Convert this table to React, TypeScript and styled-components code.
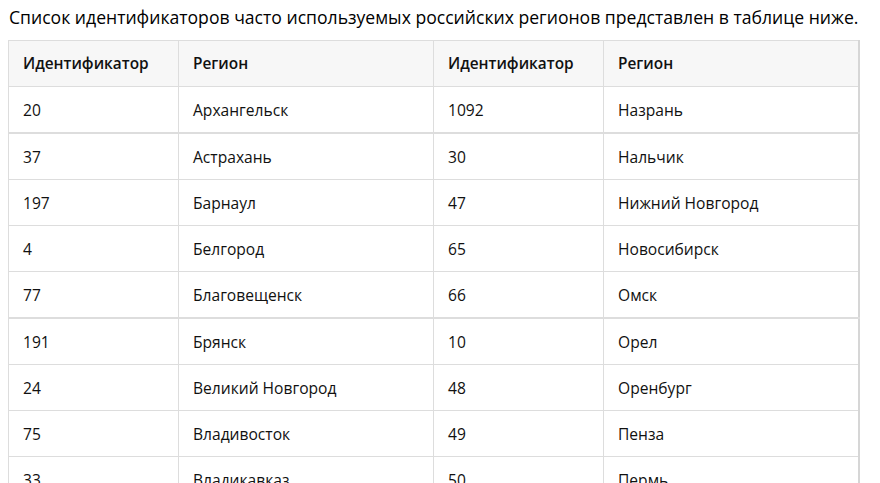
import React from "react";
import styled, { createGlobalStyle } from "styled-components";

const Global = createGlobalStyle`
  html, body { margin: 0; padding: 0; background: #fff; }
  body { padding: 0 8px; font-family: "Open Sans", "Noto Sans", sans-serif; color: #000; }
`;

const Page = styled.div`
  padding-top: 5px;
`;

const Title = styled.p`
  margin: 0 0 11px 1px;
  font-size: 17.6px;
  line-height: 24px;
  color: #000;
  white-space: nowrap;
`;

const Table = styled.table`
  width: 851px;
  border-collapse: collapse;
  table-layout: fixed;
  border-top: 1px solid #dddddd;
  border-left: 1px solid #dddddd;
  border-right: 2px solid #d6d6d6;
  font-size: 15.6px;
`;

const Row = styled.tr<{ $thick?: boolean }>`
  border-bottom: ${(p) => (p.$thick ? "2px" : "1px")} solid #dddddd;
`;

const HeadRow = styled.tr`
  background: #f7f7f7;
  border-bottom: 1px solid #dddddd;
`;

const HeadCell = styled.th`
  height: 45px;
  padding: 0 0 0 14px;
  text-align: left;
  font-weight: 600;
  font-size: 15.4px;
  color: #111;
  border-right: 1px solid #dddddd;
  vertical-align: middle;
`;

const Cell = styled.td`
  height: 45px;
  padding: 0 0 0 14px;
  color: #111;
  border-right: 1px solid #dddddd;
  vertical-align: middle;
`;

const rows: [string, string, string, string][] = [
  ["20", "Архангельск", "1092", "Назрань"],
  ["37", "Астрахань", "30", "Нальчик"],
  ["197", "Барнаул", "47", "Нижний Новгород"],
  ["4", "Белгород", "65", "Новосибирск"],
  ["77", "Благовещенск", "66", "Омск"],
  ["191", "Брянск", "10", "Орел"],
  ["24", "Великий Новгород", "48", "Оренбург"],
  ["75", "Владивосток", "49", "Пенза"],
  ["33", "Владикавказ", "50", "Пермь"],
];

export default function App() {
  return (
    <Page>
      <Global />
      <Title>
        Список идентификаторов часто используемых российских регионов представлен в таблице ниже.
      </Title>
      <Table>
        <colgroup>
          <col style={{ width: 170 }} />
          <col style={{ width: 255 }} />
          <col style={{ width: 170 }} />
          <col style={{ width: 255 }} />
        </colgroup>
        <thead>
          <HeadRow>
            <HeadCell>Идентификатор</HeadCell>
            <HeadCell>Регион</HeadCell>
            <HeadCell>Идентификатор</HeadCell>
            <HeadCell>Регион</HeadCell>
          </HeadRow>
        </thead>
        <tbody>
          {rows.map((r, i) => (
            <Row key={i} $thick={i === 0 || i === 4}>
              {r.map((c, j) => (
                <Cell key={j}>{c}</Cell>
              ))}
            </Row>
          ))}
        </tbody>
      </Table>
    </Page>
  );
}
